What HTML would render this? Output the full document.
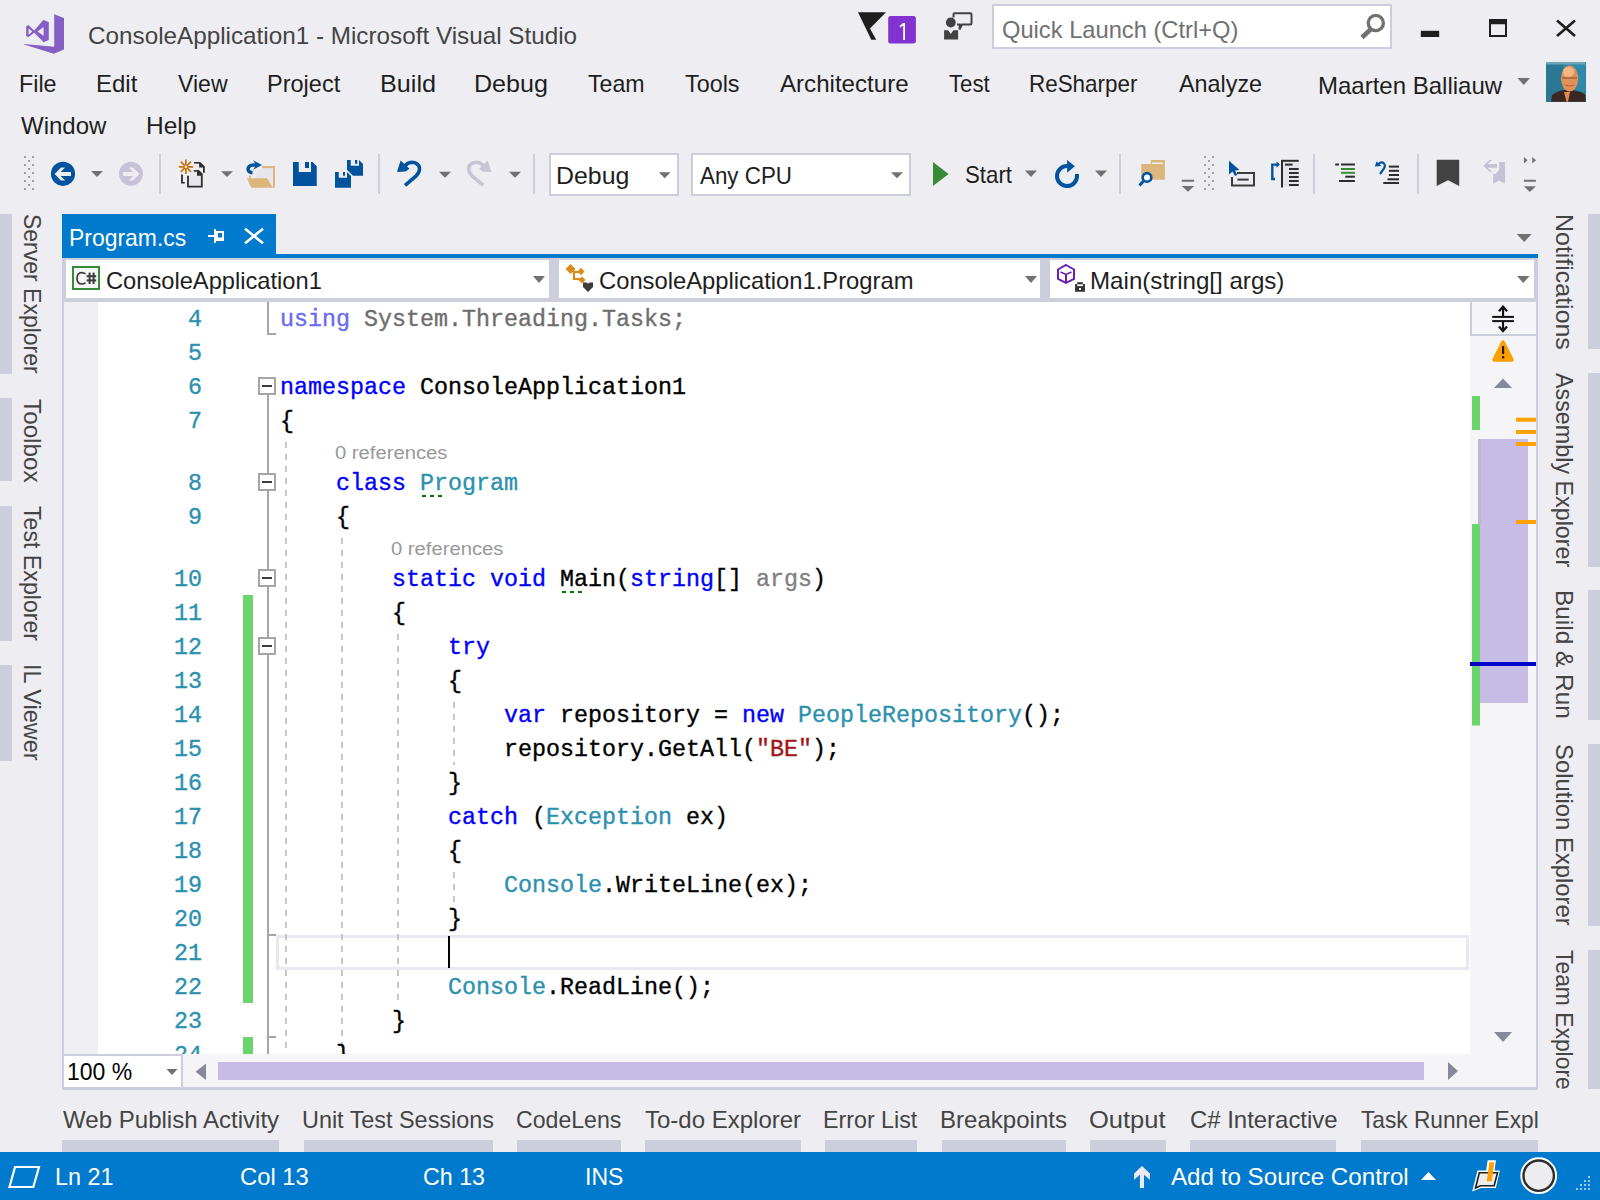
<!DOCTYPE html>
<html><head><meta charset="utf-8"><style>
html,body{margin:0;padding:0;width:1600px;height:1200px;overflow:hidden;background:#EEEEF2;font-family:"Liberation Sans",sans-serif;position:relative}
.t{position:absolute;line-height:0;white-space:pre;transform-origin:0 0}
.r{position:absolute}
svg{position:absolute;overflow:visible}
.cl{position:absolute;left:279px;line-height:0;white-space:pre;font-family:"Liberation Mono",monospace;font-size:23.333px;color:#000;-webkit-text-stroke:0.35px currentColor}
.ln{position:absolute;left:0;width:202px;text-align:right;line-height:0;white-space:pre;font-family:"Liberation Mono",monospace;font-size:23.333px;color:#2B91AF;-webkit-text-stroke:0.35px currentColor}
.kw{color:#0000FF} .ty{color:#2B91AF} .st{color:#A31515} .gr{color:#808080}
</style></head><body>
<!-- title bar -->
<div class="r" style="left:992px;top:4px;width:396px;height:41px;background:#fff;border:2px solid #CCCEDB"></div>
<!-- menu avatar -->
<div class="r" style="left:1546px;top:62px;width:40px;height:40px;background:#2A7FA0"></div>
<!-- toolbar combos -->
<div class="r" style="left:549px;top:153px;width:126px;height:39px;background:#fff;border:2px solid #CCCEDB"></div>
<div class="r" style="left:691px;top:153px;width:216px;height:39px;background:#fff;border:2px solid #CCCEDB"></div>
<!-- tab -->
<div class="r" style="left:62px;top:214px;width:214px;height:44px;background:#007ACC"></div>
<div class="r" style="left:62px;top:254px;width:1476px;height:4px;background:#007ACC"></div>
<!-- nav frame -->
<div class="r" style="left:62px;top:258px;width:1476px;height:44px;background:#CCCEDB"></div>
<div class="r" style="left:66px;top:260px;width:483px;height:38px;background:#fff"></div>
<div class="r" style="left:559px;top:260px;width:481px;height:38px;background:#fff"></div>
<div class="r" style="left:1050px;top:260px;width:484px;height:38px;background:#fff"></div>
<!-- editor frame -->
<div class="r" style="left:62px;top:302px;width:2px;height:788px;background:#CCCEDB"></div>
<div class="r" style="left:1536px;top:302px;width:2px;height:788px;background:#CCCEDB"></div>
<div class="r" style="left:62px;top:1087px;width:1476px;height:3px;background:#CCCEDB"></div>
<div class="r" style="left:64px;top:302px;width:34px;height:752px;background:#EFEFF2"></div>
<div class="r" style="left:98px;top:302px;width:1372px;height:752px;background:#FFFFFF"></div>
<div class="r" style="left:1470px;top:302px;width:66px;height:752px;background:#F5F5F7"></div>
<div class="r" style="left:64px;top:1054px;width:1472px;height:33px;background:#F5F5F7"></div>
<!-- zoom combo -->
<div class="r" style="left:64px;top:1054px;width:117px;height:31px;background:#fff;border:2px solid #CCCEDB;border-left:none"></div>
<div class="r" style="left:218px;top:1062px;width:1206px;height:18px;background:#C6BCE6"></div>
<!-- side strips -->
<div class="r" style="left:0;top:214px;width:12px;height:160px;background:#CCCEDB"></div>
<div class="r" style="left:0;top:398px;width:12px;height:83px;background:#CCCEDB"></div>
<div class="r" style="left:0;top:506px;width:12px;height:135px;background:#CCCEDB"></div>
<div class="r" style="left:0;top:665px;width:12px;height:96px;background:#CCCEDB"></div>
<div class="r" style="left:1588px;top:214px;width:12px;height:135px;background:#CCCEDB"></div>
<div class="r" style="left:1588px;top:373px;width:12px;height:194px;background:#CCCEDB"></div>
<div class="r" style="left:1588px;top:590px;width:12px;height:130px;background:#CCCEDB"></div>
<div class="r" style="left:1588px;top:744px;width:12px;height:182px;background:#CCCEDB"></div>
<div class="r" style="left:1588px;top:950px;width:12px;height:139px;background:#CCCEDB"></div>
<!-- bottom tab strips -->
<div class="r" style="left:62px;top:1140px;width:217px;height:12px;background:#CCCEDB"></div>
<div class="r" style="left:304px;top:1140px;width:189px;height:12px;background:#CCCEDB"></div>
<div class="r" style="left:517px;top:1140px;width:104px;height:12px;background:#CCCEDB"></div>
<div class="r" style="left:645px;top:1140px;width:156px;height:12px;background:#CCCEDB"></div>
<div class="r" style="left:825px;top:1140px;width:92px;height:12px;background:#CCCEDB"></div>
<div class="r" style="left:942px;top:1140px;width:124px;height:12px;background:#CCCEDB"></div>
<div class="r" style="left:1090px;top:1140px;width:76px;height:12px;background:#CCCEDB"></div>
<div class="r" style="left:1190px;top:1140px;width:146px;height:12px;background:#CCCEDB"></div>
<div class="r" style="left:1361px;top:1140px;width:177px;height:12px;background:#CCCEDB"></div>
<!-- status bar -->
<div class="r" style="left:0;top:1152px;width:1600px;height:48px;background:#007ACC"></div>

<div style="position:absolute;left:64px;top:302px;width:1406px;height:752px;overflow:hidden">
<div class="r" style="left:212px;top:633px;width:1193px;height:35px;background:transparent;box-sizing:border-box;border:3px solid #E8E8F0"></div>
<div class="r" style="left:179px;top:293px;width:10px;height:408px;background:#6CD46C;"></div>
<div class="r" style="left:179px;top:735px;width:10px;height:20px;background:#6CD46C;"></div>
<div class="r" style="left:203px;top:0px;width:2px;height:33px;background:#A5A5A5;"></div>
<div class="r" style="left:203px;top:31px;width:9px;height:2px;background:#A5A5A5;"></div>
<div class="r" style="left:194px;top:75px;width:14px;height:14px;border:2px solid #A5A5A5;background:#fff"></div>
<div class="r" style="left:198px;top:83px;width:10px;height:2px;background:#3C3C3C;"></div>
<div class="r" style="left:194px;top:171px;width:14px;height:14px;border:2px solid #A5A5A5;background:#fff"></div>
<div class="r" style="left:198px;top:179px;width:10px;height:2px;background:#3C3C3C;"></div>
<div class="r" style="left:194px;top:267px;width:14px;height:14px;border:2px solid #A5A5A5;background:#fff"></div>
<div class="r" style="left:198px;top:275px;width:10px;height:2px;background:#3C3C3C;"></div>
<div class="r" style="left:194px;top:335px;width:14px;height:14px;border:2px solid #A5A5A5;background:#fff"></div>
<div class="r" style="left:198px;top:343px;width:10px;height:2px;background:#3C3C3C;"></div>
<div class="r" style="left:203px;top:93px;width:2px;height:78px;background:#A5A5A5;"></div>
<div class="r" style="left:203px;top:189px;width:2px;height:78px;background:#A5A5A5;"></div>
<div class="r" style="left:203px;top:285px;width:2px;height:50px;background:#A5A5A5;"></div>
<div class="r" style="left:203px;top:353px;width:2px;height:399px;background:#A5A5A5;"></div>
<div class="r" style="left:203px;top:632px;width:9px;height:2px;background:#A5A5A5;"></div>
<div class="r" style="left:203px;top:734px;width:9px;height:2px;background:#A5A5A5;"></div>
<div class="r" style="left:221px;top:140px;width:2px;height:612px;background:repeating-linear-gradient(#C6C6C6 0 6px,transparent 6px 12px)"></div>
<div class="r" style="left:277px;top:236px;width:2px;height:516px;background:repeating-linear-gradient(#C6C6C6 0 6px,transparent 6px 12px)"></div>
<div class="r" style="left:333px;top:332px;width:2px;height:369px;background:repeating-linear-gradient(#C6C6C6 0 6px,transparent 6px 12px)"></div>
<div class="r" style="left:389px;top:400px;width:2px;height:63px;background:repeating-linear-gradient(#C6C6C6 0 6px,transparent 6px 12px)"></div>
<div class="r" style="left:389px;top:570px;width:2px;height:30px;background:repeating-linear-gradient(#C6C6C6 0 6px,transparent 6px 12px)"></div>
<div class="ln" style="left:-64px;top:17.9px">4</div>
<div class="cl" style="left:216px;top:17.9px"><span style="color:#6A6AF0">using</span> <span style="color:#6E6E6E">System.Threading.Tasks;</span></div>
<div class="ln" style="left:-64px;top:51.9px">5</div>
<div class="ln" style="left:-64px;top:85.9px">6</div>
<div class="cl" style="left:216px;top:85.9px"><span class="kw">namespace</span> ConsoleApplication1</div>
<div class="ln" style="left:-64px;top:119.9px">7</div>
<div class="cl" style="left:216px;top:119.9px">{</div>
<div class="ln" style="left:-64px;top:181.9px">8</div>
<div class="cl" style="left:216px;top:181.9px">    <span class="kw">class</span> <span class="ty">Program</span></div>
<div class="ln" style="left:-64px;top:215.9px">9</div>
<div class="cl" style="left:216px;top:215.9px">    {</div>
<div class="ln" style="left:-64px;top:277.9px">10</div>
<div class="cl" style="left:216px;top:277.9px">        <span class="kw">static</span> <span class="kw">void</span> Main(<span class="kw">string</span>[] <span class="gr">args</span>)</div>
<div class="ln" style="left:-64px;top:311.9px">11</div>
<div class="cl" style="left:216px;top:311.9px">        {</div>
<div class="ln" style="left:-64px;top:345.9px">12</div>
<div class="cl" style="left:216px;top:345.9px">            <span class="kw">try</span></div>
<div class="ln" style="left:-64px;top:379.9px">13</div>
<div class="cl" style="left:216px;top:379.9px">            {</div>
<div class="ln" style="left:-64px;top:413.9px">14</div>
<div class="cl" style="left:216px;top:413.9px">                <span class="kw">var</span> repository = <span class="kw">new</span> <span class="ty">PeopleRepository</span>();</div>
<div class="ln" style="left:-64px;top:447.9px">15</div>
<div class="cl" style="left:216px;top:447.9px">                repository.GetAll(<span class="st">"BE"</span>);</div>
<div class="ln" style="left:-64px;top:481.9px">16</div>
<div class="cl" style="left:216px;top:481.9px">            }</div>
<div class="ln" style="left:-64px;top:515.9px">17</div>
<div class="cl" style="left:216px;top:515.9px">            <span class="kw">catch</span> (<span class="ty">Exception</span> ex)</div>
<div class="ln" style="left:-64px;top:549.9px">18</div>
<div class="cl" style="left:216px;top:549.9px">            {</div>
<div class="ln" style="left:-64px;top:583.9px">19</div>
<div class="cl" style="left:216px;top:583.9px">                <span class="ty">Console</span>.WriteLine(ex);</div>
<div class="ln" style="left:-64px;top:617.9px">20</div>
<div class="cl" style="left:216px;top:617.9px">            }</div>
<div class="ln" style="left:-64px;top:651.9px">21</div>
<div class="ln" style="left:-64px;top:685.9px">22</div>
<div class="cl" style="left:216px;top:685.9px">            <span class="ty">Console</span>.ReadLine();</div>
<div class="ln" style="left:-64px;top:719.9px">23</div>
<div class="cl" style="left:216px;top:719.9px">        }</div>
<div class="ln" style="left:-64px;top:753.9px">24</div>
<div class="cl" style="left:216px;top:753.9px">    }</div>
<div class="r" style="left:358px;top:193px;width:20px;height:2px;background:repeating-linear-gradient(90deg,#007A00 0 4px,transparent 4px 8px)"></div>
<div class="r" style="left:498px;top:289px;width:20px;height:2px;background:repeating-linear-gradient(90deg,#007A00 0 4px,transparent 4px 8px)"></div>
<div class="r" style="left:384px;top:634px;width:2px;height:32px;background:#000;"></div>
</div>
<svg style="left:0;top:0" width="1600" height="1200" viewBox="0 0 1600 1200">
<!-- VS logo -->
<path fill="#865FC5" d="M54.2,14.2 L64,18.1 L64,49.6 L53.75,53.75 L24,44.4 L24.3,43.9 L54.2,46.7 Z"/>
<path fill="#865FC5" fill-rule="evenodd" d="M26.2,26.4 L28.3,24.9 L34.2,30.4 L43.3,19.9 L48.8,22.1 L48.8,40 L43.7,42.2 L34.2,32.8 L28.3,37.3 L26.2,36.1 Z M28.6,28.6 L32.3,31.6 L28.6,34.8 Z M43.6,26.9 L37.6,31.6 L43.6,35.8 Z"/>
<!-- flag + badge -->
<path fill="#1E1E1E" d="M858,12.3 L886,12.3 L870,28.6 L876.2,39.8 L871.3,39.8 Z"/>
<rect x="888.2" y="16" width="27.7" height="27.6" rx="2.5" fill="#8232CF"/>
<path fill="#fff" d="M899.5,25.8 L903.3,23 L905,23 L905,40 L903.2,40 L903.2,25.6 L900.2,27.5 Z"/>
<!-- feedback person -->
<circle cx="950.8" cy="22.5" r="4.9" fill="#424242"/>
<path fill="#424242" d="M944.1,30.2 L948.2,30.2 L950.8,33.9 L953.4,30.2 L958.1,30.2 L958.1,39.6 L944.1,39.6 Z"/>
<path fill="none" stroke="#424242" stroke-width="2" d="M953.5,17.5 L953.5,14.5 Q953.5,13.3 954.7,13.3 L970.3,13.3 Q971.5,13.3 971.5,14.5 L971.5,23.3 Q971.5,24.5 970.3,24.5 L962,24.5 L959.5,29.5 L959.8,24.5 L957,24.5"/>
<!-- quick launch search -->
<circle cx="1375.8" cy="23" r="7.6" fill="none" stroke="#717171" stroke-width="3.3"/>
<path d="M1371.3,28.8 L1362,37.5" stroke="#717171" stroke-width="4.6"/>
<!-- window buttons -->
<rect x="1420.8" y="30.8" width="18.4" height="6.2" fill="#1E1E1E"/>
<path fill="#1E1E1E" fill-rule="evenodd" d="M1489,19 L1507,19 L1507,37 L1489,37 Z M1491,24.3 L1505,24.3 L1505,35 L1491,35 Z"/>
<path d="M1557,20.5 L1575,36 M1575,20.5 L1557,36" stroke="#1E1E1E" stroke-width="2.6"/>
<!-- user dropdown -->
<path fill="#717171" d="M1517.5,78 L1530,78 L1523.75,85 Z"/>
<!-- avatar -->
<g>
<rect x="1546" y="62" width="39.5" height="39.7" fill="#2A7894"/>
<rect x="1563" y="62" width="22.5" height="30" fill="#2F89AA"/>
<rect x="1546" y="62" width="39.5" height="2.5" fill="#6FA3B5"/>
<path fill="#3B2622" d="M1551,101.7 L1552,95 Q1558,90.5 1565,90 L1572,90 Q1581,91 1585.5,95 L1585.5,101.7 Z"/>
<path fill="#E08A50" d="M1564,92 L1570,92 L1568,101.7 L1566.5,101.7 Z"/>
<ellipse cx="1569.6" cy="78.5" rx="8.6" ry="13" fill="#E39158"/>
<ellipse cx="1568.5" cy="72" rx="5.5" ry="5" fill="#F2B882"/>
<rect x="1562" y="77" width="15" height="2" fill="#9A5E3E" opacity="0.7"/>
<path fill="#B8683A" d="M1563,84 Q1569.6,89 1576,84 Q1569.6,86.5 1563,84 Z"/>
</g>
<!-- toolbar grip 1 -->
<g fill="#A0A0A8">
<rect x="24" y="156" width="2" height="2"/><rect x="24" y="164" width="2" height="2"/><rect x="24" y="172" width="2" height="2"/><rect x="24" y="180" width="2" height="2"/><rect x="24" y="188" width="2" height="2"/>
<rect x="32" y="156" width="2" height="2"/><rect x="32" y="164" width="2" height="2"/><rect x="32" y="172" width="2" height="2"/><rect x="32" y="180" width="2" height="2"/><rect x="32" y="188" width="2" height="2"/>
<rect x="28" y="160" width="2" height="2"/><rect x="28" y="168" width="2" height="2"/><rect x="28" y="176" width="2" height="2"/><rect x="28" y="184" width="2" height="2"/>
<rect x="1204" y="156" width="2" height="2"/><rect x="1204" y="164" width="2" height="2"/><rect x="1204" y="172" width="2" height="2"/><rect x="1204" y="180" width="2" height="2"/><rect x="1204" y="188" width="2" height="2"/>
<rect x="1212" y="156" width="2" height="2"/><rect x="1212" y="164" width="2" height="2"/><rect x="1212" y="172" width="2" height="2"/><rect x="1212" y="180" width="2" height="2"/><rect x="1212" y="188" width="2" height="2"/>
<rect x="1208" y="160" width="2" height="2"/><rect x="1208" y="168" width="2" height="2"/><rect x="1208" y="176" width="2" height="2"/><rect x="1208" y="184" width="2" height="2"/>
</g>
<!-- back -->
<circle cx="63" cy="173.8" r="12.1" fill="#00539C"/>
<path fill="#EEEEF2" d="M54.6,173.9 L61,167.4 L65.2,167.4 L60.6,172 L71,172 L71,176 L60.6,176 L65.2,180.5 L61,180.5 Z"/>
<!-- forward disabled -->
<circle cx="131" cy="173.8" r="12" fill="#C8C2D8"/>
<path fill="#EEEEF2" d="M139.4,173.9 L133,167.4 L128.8,167.4 L133.4,172 L123,172 L123,176 L133.4,176 L128.8,180.5 L133,180.5 Z"/>
<!-- dropdown arrows -->
<g fill="#717171">
<path d="M91,171 L103,171 L97,177 Z"/>
<path d="M221,171.2 L233,171.2 L227,177 Z"/>
<path d="M439,171.8 L451,171.8 L445,177.7 Z"/>
<path d="M509,171.8 L521,171.8 L515,177.7 Z"/>
<path d="M658.8,172.3 L670.6,172.3 L664.7,178.3 Z"/>
<path d="M891,172.3 L903,172.3 L897,178.3 Z"/>
<path d="M1025,170.6 L1037,170.6 L1031,177 Z"/>
<path d="M1095,170.6 L1107,170.6 L1101,177 Z"/>
<path d="M1181.75,179.8 L1194.1,179.8 L1194.1,181.8 L1181.75,181.8 Z M1181.75,186 L1194.1,186 L1188,191.8 Z"/>
<path d="M1523.9,157 L1527.6,160.2 L1523.9,163.6 Z M1532.3,157 L1536,160.2 L1532.3,163.6 Z M1523.9,179.8 L1535.9,179.8 L1535.9,181.8 L1523.9,181.8 Z M1523.9,186.3 L1535.9,186.3 L1529.9,192 Z"/>
<path d="M1516.7,234 L1531.7,234 L1524.2,242 Z"/>
<path d="M533,276 L545,276 L539,283 Z"/>
<path d="M1025,276 L1037,276 L1031,283 Z"/>
<path d="M1517,276 L1529.5,276 L1523.25,283 Z"/>
<path d="M166.5,1069 L177.5,1069 L172,1075 Z"/>
</g>
<!-- separators -->
<g fill="#CCCEDB">
<rect x="159" y="154" width="2" height="40"/>
<rect x="378" y="154" width="2" height="40"/>
<rect x="533" y="154" width="2" height="40"/>
<rect x="1119" y="154" width="2" height="40"/>
<rect x="1313" y="154" width="2" height="40"/>
<rect x="1417" y="154" width="2" height="40"/>
</g>
<!-- new project -->
<g stroke="#C9730F" stroke-width="1.7">
<path d="M185.9,159.6 L185.9,174 M178.7,166.8 L193.1,166.8 M180.8,161.7 L191,171.9 M191,161.7 L180.8,171.9"/>
</g>
<circle cx="185.9" cy="166.8" r="1.3" fill="#F2F2F4"/>
<path fill="#E6E6EC" d="M188.9,175.8 L193.7,171.6 L197,171.6 L197,175.8 L200.9,175.8 L200.9,185.7 L188.9,185.7 Z"/>
<g fill="#2D2D2D">
<rect x="194" y="162" width="6" height="1.6"/>
<path d="M199.1,162 L200.2,162 L204.8,166.4 L204.8,172.8 L203,172.8 L203,167.4 L199.1,167.4 Z"/>
<rect x="193.7" y="170.1" width="5.1" height="1.6"/>
<path d="M197,170.1 L198.9,170.1 L202.7,173.7 L202.7,187.5 L187.1,187.5 L187.1,175.8 L188.9,175.8 L188.9,185.7 L200.9,185.7 L200.9,175.8 L197,175.8 Z"/>
<path d="M181.1,174.6 L182.9,174.6 L182.9,182.1 L184.7,182.1 L184.7,183.6 L181.1,183.6 Z"/>
</g>
<!-- open folder -->
<path fill="#E6E6EC" stroke="#DCB67A" stroke-width="1.8" d="M262,167.1 L274,167.1 L274,186.9"/>
<path fill="#E6E6EC" d="M256,173.5 L259,170 L263,168 L273.1,168 L273.1,187 L256,187 Z"/>
<rect x="273" y="166.2" width="1.9" height="21.6" fill="#DCB67A"/>
<rect x="262" y="166.2" width="12" height="1.9" fill="#DCB67A"/>
<path fill="#DCB67A" d="M247,178.2 L267.1,178.2 L272.9,187.8 L251.2,187.8 Z"/>
<rect x="249.1" y="175.5" width="1.8" height="3" fill="#DCB67A"/>
<path fill="none" stroke="#00539C" stroke-width="3.4" d="M257,165 L253,165 Q248,165.5 248,169.5 Q248.5,172.5 252.5,172.8"/>
<path fill="#00539C" d="M253,160.2 L262,165 L253,169.8 L256.3,165 Z"/>
<!-- save -->
<path fill="#00539C" fill-rule="evenodd" d="M293,162 L312.5,162 L316.75,166.2 L316.75,186 L293,186 Z M298.75,162 L311,162 L311,172 L298.75,172 Z"/>
<rect x="305" y="162" width="4" height="6" fill="#00539C"/>
<!-- save all -->
<path fill="#00539C" fill-rule="evenodd" d="M347,160 L359,160 L363,164 L363,175.75 L353,175.75 L347,169.8 Z M350.75,160 L359,160 L359,165.75 L350.75,165.75 Z"/>
<rect x="355" y="160" width="2.25" height="3.75" fill="#00539C"/>
<path fill="#00539C" fill-rule="evenodd" d="M335,172 L347,172 L351,176 L351,187.75 L335,187.75 Z M338.75,172 L347,172 L347,177.75 L338.75,177.75 Z"/>
<rect x="343" y="172" width="2" height="3.75" fill="#00539C"/>
<!-- undo -->
<path fill="none" stroke="#00539C" stroke-width="3.6" d="M405,185.3 L415.6,176.5 Q420,172 419.5,168 Q418.5,162.5 411.5,162.3 Q407.5,162.5 404.5,166.5"/>
<path fill="#00539C" d="M397,172 L400.6,160.5 L409.5,168.8 L405.5,171.5 Z"/>
<!-- redo disabled -->
<path fill="none" stroke="#C8C4D6" stroke-width="3.6" d="M483.3,185.3 L472.7,176.5 Q468.3,172 468.8,168 Q469.8,162.5 476.8,162.3 Q480.8,162.5 483.8,166.5"/>
<path fill="#C8C4D6" d="M491.3,172 L487.7,160.5 L478.8,168.8 L482.8,171.5 Z"/>
<!-- play -->
<path fill="#388A34" d="M933,162 L948.6,174 L933,186 Z"/>
<!-- refresh -->
<path fill="none" stroke="#00539C" stroke-width="4" d="M1077,174 L1077,176.1 A10,10 0 1 1 1067.5,166.1"/>
<path fill="#00539C" d="M1067.1,159.9 L1074.9,166.35 L1067.1,172.8 Z"/>
<!-- find in files -->
<path fill="#DCB67A" d="M1150.8,160.1 L1164.9,160.1 L1164.9,179.8 L1141.25,179.8 L1141.25,164 L1150.8,164 Z"/>
<rect x="1152" y="162.5" width="11" height="1.5" fill="#F2F2F2"/>
<circle cx="1147" cy="177.4" r="4.3" fill="#fff" stroke="#00539C" stroke-width="2.6"/>
<path d="M1143.5,181 L1139.5,185.5" stroke="#00539C" stroke-width="3"/>
<!-- select icon -->
<path fill="none" stroke="#3C3C3C" stroke-width="2" d="M1237,173 L1254,173 L1254,185.5 L1232,185.5 L1232,177"/>
<rect x="1237.4" y="178.6" width="11.3" height="2" fill="#3C3C3C"/>
<path fill="#00539C" d="M1229,160.7 L1239.5,170 L1235,170.5 L1237.3,175 L1235,176 L1232.6,171.5 L1229,174.5 Z"/>
<!-- bracket list icon -->
<path fill="none" stroke="#00539C" stroke-width="2.4" d="M1277,164.6 L1272.3,164.6 L1272.3,179 L1275,179"/>
<path fill="#00539C" d="M1276.5,161.5 L1280,164.6 L1276.5,167.7 Z"/>
<rect x="1283" y="161" width="16" height="26" fill="#E4E4EA"/>
<g fill="#2D2D2D">
<rect x="1281" y="160" width="2" height="27.5"/>
<rect x="1281" y="159.8" width="17.7" height="2"/>
<rect x="1285" y="163.6" width="7.6" height="2"/>
<rect x="1289" y="168" width="9.7" height="2"/>
<rect x="1289" y="172" width="9.7" height="2"/>
<rect x="1289" y="176" width="9.7" height="2"/>
<rect x="1289" y="180" width="9.7" height="2"/>
<rect x="1289" y="184" width="9.7" height="2"/>
</g>
<!-- format lines icon -->
<g fill="#2D2D2D">
<rect x="1335.2" y="163.5" width="3.8" height="2"/>
<rect x="1341" y="163.5" width="13.9" height="2"/>
<rect x="1345.3" y="175.7" width="9.6" height="2"/>
<rect x="1339" y="180" width="15.9" height="2"/>
</g>
<rect x="1341" y="168" width="13.9" height="2" fill="#388A34"/>
<rect x="1341" y="171.8" width="13.9" height="2" fill="#388A34"/>
<!-- undo lines icon -->
<g fill="#2D2D2D">
<rect x="1388.9" y="165.6" width="10.1" height="2"/>
<rect x="1388.9" y="169.8" width="10.1" height="2"/>
<rect x="1388.9" y="174" width="10.1" height="2"/>
<rect x="1387.5" y="178.3" width="11.5" height="2"/>
<rect x="1383.3" y="182" width="15.7" height="2"/>
</g>
<path fill="none" stroke="#00539C" stroke-width="2.2" d="M1380,174 L1384,168.5 Q1386,165 1383.5,163 Q1381,161.5 1378.5,164"/>
<path fill="#00539C" d="M1374.8,166.5 L1376.5,161.5 L1381.5,166 Z"/>
<!-- bookmark -->
<path fill="#424242" d="M1436.7,159.8 L1459.2,159.8 L1459.2,185.9 L1448,180.2 L1436.7,185.9 Z"/>
<!-- bookmark nav disabled -->
<path fill="#C6C2D6" d="M1499.1,162 L1505.1,162 L1505.1,183.7 L1499.1,180.4 L1493.1,183.7 L1493.1,174 L1495.5,174 L1499.1,170 Z"/>
<path fill="#C6C2D6" d="M1483.2,165.8 L1489.5,160 L1492.2,160 L1487.5,163.9 L1497,163.9 L1497,167.8 L1487.5,167.8 L1492.2,171.7 L1489.5,171.7 Z"/>
<!-- tab icons -->
<g fill="#fff">
<rect x="208" y="235" width="6" height="2"/>
<rect x="214" y="229" width="2" height="14"/>
</g>
<path fill="#fff" fill-rule="evenodd" d="M216,231 L224,231 L224,241 L216,241 Z M218,233 L222,233 L222,237.5 L218,237.5 Z"/>
<path d="M245,228.8 L263,243.2 M263,228.8 L245,243.2" stroke="#fff" stroke-width="2.6"/>
<!-- nav icons -->
<rect x="73" y="267" width="26" height="22" fill="#F6F6F6" stroke="#388A34" stroke-width="2"/>
<path fill="none" stroke="#3C3C3C" stroke-width="1.7" d="M85.5,274 Q84,272.6 81.8,272.6 Q77,272.6 77,278.3 Q77,284 81.8,284 Q84,284 85.5,282.6"/><g fill="#3C3C3C"><rect x="88.6" y="272.6" width="2" height="11.4"/><rect x="92.6" y="272.6" width="2" height="11.4"/><rect x="86.6" y="275.2" width="9.6" height="2"/><rect x="86.6" y="279.4" width="9.6" height="2"/></g>
<path fill="none" stroke="#D98C1A" stroke-width="2.2" d="M571,269 L574,272 L574,279 L581,279 M574,272 L581,272"/>
<path fill="#D98C1A" d="M570.5,264 L575.5,269 L570.5,274 L565.5,269 Z"/>
<path fill="#D98C1A" d="M581,267.8 L584.5,271.5 L581,275.2 L577.5,271.5 Z"/>
<path fill="#D98C1A" d="M582,276.5 L585.5,280 L582,283.5 L578.5,280 Z"/>
<path fill="#3C3C3C" d="M583,282.5 L587,282.5 L588,284 L589,282.5 L593,282.5 L593,287 L588,292 L583,287 Z"/>
<path fill="none" stroke="#6A1FB0" stroke-width="2" d="M1066,265 L1074,269.5 L1074,279 L1066,283 L1058,279 L1058,269.5 Z M1066,274 L1066,283.5"/>
<path fill="none" stroke="#6A1FB0" stroke-width="1.4" d="M1060.5,272 L1066,274.5 L1071.5,272"/>
<rect x="1075.1" y="284" width="9.8" height="7.8" fill="#333"/>
<rect x="1077.2" y="282.2" width="5.6" height="1.8" fill="#333"/>
<rect x="1077.1" y="284.3" width="5.8" height="1.8" fill="#fff"/>
<rect x="1079" y="288" width="2" height="2" fill="#fff"/>
</svg>

<svg style="left:0;top:0" width="1600" height="1200" viewBox="0 0 1600 1200">
<!-- vertical scrollbar split button -->
<rect x="1471" y="302" width="65" height="33" fill="#F5F5F7"/>
<rect x="1470" y="302" width="2" height="34" fill="#CCCEDB"/>
<rect x="1470" y="334" width="66" height="2" fill="#CCCEDB"/>
<g fill="#111">
<rect x="1492.2" y="315.9" width="21.7" height="2"/>
<rect x="1492.2" y="320.1" width="21.7" height="2"/>
<rect x="1502" y="308" width="2.1" height="8"/>
<rect x="1502" y="322" width="2.1" height="8"/>
</g>
<path d="M1499,311.2 L1503,306.8 L1507,311.2 M1499,326.6 L1503,331 L1507,326.6" fill="none" stroke="#111" stroke-width="2.3"/>
<!-- warning -->
<path fill="#F9A000" d="M1503,340.3 Q1504,340.3 1504.6,341.3 L1513.6,359 Q1514,361.7 1512,361.7 L1494,361.7 Q1492,361.7 1492.4,359 L1501.4,341.3 Q1502,340.3 1503,340.3 Z"/>
<rect x="1502" y="346" width="2.2" height="8" fill="#1E1E1E"/>
<rect x="1502" y="356" width="2.2" height="2.4" fill="#1E1E1E"/>
<!-- up arrow -->
<path fill="#868999" d="M1494,388 L1512,388 L1503,378.5 Z"/>
<!-- markers -->
<rect x="1472" y="396" width="8" height="34" fill="#6CD46C"/>
<rect x="1478" y="439" width="50" height="264" fill="#C6BCE6"/>
<rect x="1478" y="439" width="3" height="85" fill="#BDBBC8"/>
<rect x="1516" y="417.7" width="20" height="4" fill="#FFA100"/>
<rect x="1516" y="430" width="20" height="4" fill="#FFA100"/>
<rect x="1516" y="442" width="20" height="4" fill="#FFA100"/>
<rect x="1516" y="520" width="20" height="4" fill="#FFA100"/>
<rect x="1472" y="524" width="8" height="201.5" fill="#6CD46C"/>
<rect x="1470" y="662" width="66" height="4" fill="#0000CD"/>
<!-- down arrow -->
<path fill="#868999" d="M1494,1032 L1512,1032 L1503,1042 Z"/>
<!-- hscroll arrows -->
<path fill="#868999" d="M206,1063.4 L206,1080 L195.6,1071.7 Z"/>
<path fill="#868999" d="M1448,1062 L1448,1080 L1458,1071 Z"/>
<!-- status bar -->
<path fill="none" stroke="#fff" stroke-width="2.2" d="M15,1167 L39,1167 L33.3,1187 L9.5,1187 Z"/>
<path fill="#EAEAF0" d="M1142,1166.1 L1149.9,1173.6 L1149.9,1179.8 L1144,1174.7 L1144,1187.9 L1139.9,1187.9 L1139.9,1174.7 L1134.1,1179.8 L1134.1,1173.6 Z"/>
<path fill="#fff" d="M1421,1180 L1436,1180 L1428.5,1172 Z"/>
<path fill="#fff" d="M1472.2,1191.4 L1477.5,1170.4 L1486.2,1170.4 L1487.6,1160.3 L1495.9,1160.3 L1494.6,1170.4 L1499.8,1170.4 L1495.9,1187.9 L1481,1187.9 Z"/>
<path fill="#EDEDED" stroke="#1E1E1E" stroke-width="1.6" d="M1475.5,1188 L1479.3,1172.8 L1497.5,1172.8 L1494.2,1185.7 L1480.5,1185.7 Z"/>
<path fill="#FFA100" d="M1489.3,1162.3 L1494.3,1162.3 L1491.7,1181.3 L1486.8,1181.3 Z"/>
<circle cx="1538.7" cy="1175.7" r="17.3" fill="#EDEDF0" stroke="#fff" stroke-width="2.2"/>
<circle cx="1538.7" cy="1175.7" r="15.2" fill="none" stroke="#2D2D2D" stroke-width="2.4"/>
<g fill="#9CC8EE">
<rect x="1588" y="1176" width="2" height="2"/>
<rect x="1584" y="1180" width="2" height="2"/><rect x="1588" y="1180" width="2" height="2"/>
<rect x="1580" y="1184" width="2" height="2"/><rect x="1584" y="1184" width="2" height="2"/><rect x="1588" y="1184" width="2" height="2"/>
<rect x="1576" y="1188" width="2" height="2"/><rect x="1580" y="1188" width="2" height="2"/><rect x="1584" y="1188" width="2" height="2"/><rect x="1588" y="1188" width="2" height="2"/>
</g>
</svg>

<div class="t" style="left:87.74px;top:35.60px;font-size:24px;color:#444444;transform:scaleX(1.0109)">ConsoleApplication1 - Microsoft Visual Studio</div>
<div class="t" style="left:1002.01px;top:29.50px;font-size:24px;color:#717171;transform:scaleX(0.9873)">Quick Launch (Ctrl+Q)</div>
<div class="t" style="left:19.06px;top:84.00px;font-size:24px;color:#1E1E1E;transform:scaleX(0.9722)">File</div>
<div class="t" style="left:96.00px;top:84.00px;font-size:24px;color:#1E1E1E;transform:scaleX(1.0000)">Edit</div>
<div class="t" style="left:177.50px;top:84.00px;font-size:24px;color:#1E1E1E;transform:scaleX(0.9615)">View</div>
<div class="t" style="left:267.04px;top:84.00px;font-size:24px;color:#1E1E1E;transform:scaleX(0.9795)">Project</div>
<div class="t" style="left:379.90px;top:84.00px;font-size:24px;color:#1E1E1E;transform:scaleX(1.0500)">Build</div>
<div class="t" style="left:473.91px;top:84.00px;font-size:24px;color:#1E1E1E;transform:scaleX(1.0448)">Debug</div>
<div class="t" style="left:587.50px;top:84.00px;font-size:24px;color:#1E1E1E;transform:scaleX(0.9649)">Team</div>
<div class="t" style="left:684.50px;top:84.00px;font-size:24px;color:#1E1E1E;transform:scaleX(0.9727)">Tools</div>
<div class="t" style="left:779.50px;top:84.00px;font-size:24px;color:#1E1E1E;transform:scaleX(1.0039)">Architecture</div>
<div class="t" style="left:948.75px;top:84.00px;font-size:24px;color:#1E1E1E;transform:scaleX(0.9261)">Test</div>
<div class="t" style="left:1029.13px;top:84.00px;font-size:24px;color:#1E1E1E;transform:scaleX(0.9342)">ReSharper</div>
<div class="t" style="left:1178.70px;top:84.00px;font-size:24px;color:#1E1E1E;transform:scaleX(0.9726)">Analyze</div>
<div class="t" style="left:1318.00px;top:86.00px;font-size:24px;color:#1E1E1E;transform:scaleX(1.0000)">Maarten Balliauw</div>
<div class="t" style="left:21.00px;top:125.75px;font-size:24px;color:#1E1E1E;transform:scaleX(1.0000)">Window</div>
<div class="t" style="left:145.96px;top:125.75px;font-size:24px;color:#1E1E1E;transform:scaleX(1.0213)">Help</div>
<div class="t" style="left:556.43px;top:175.50px;font-size:24px;color:#1E1E1E;transform:scaleX(1.0373)">Debug</div>
<div class="t" style="left:699.60px;top:175.50px;font-size:24px;color:#1E1E1E;transform:scaleX(0.9320)">Any CPU</div>
<div class="t" style="left:965.07px;top:175.40px;font-size:24px;color:#1E1E1E;transform:scaleX(0.9280)">Start</div>
<div class="t" style="left:69.09px;top:237.60px;font-size:24px;color:#FFFFFF;transform:scaleX(0.9550)">Program.cs</div>
<div class="t" style="left:106.01px;top:281.00px;font-size:24px;color:#1E1E1E;transform:scaleX(0.9862)">ConsoleApplication1</div>
<div class="t" style="left:599.01px;top:281.00px;font-size:24px;color:#1E1E1E;transform:scaleX(0.9905)">ConsoleApplication1.Program</div>
<div class="t" style="left:1089.99px;top:281.00px;font-size:24px;color:#1E1E1E;transform:scaleX(1.0053)">Main(string[] args)</div>
<div class="t" style="left:335.13px;top:452.75px;font-size:18px;color:#999999;transform:scaleX(1.1237)">0 references</div>
<div class="t" style="left:391.13px;top:548.75px;font-size:18px;color:#999999;transform:scaleX(1.1237)">0 references</div>
<div class="t" style="left:66.83px;top:1072.00px;font-size:24px;color:#000000;transform:scaleX(0.9577)">100 %</div>
<div class="t" style="left:62.50px;top:1119.50px;font-size:24px;color:#444444;transform:scaleX(1.0023)">Web Publish Activity</div>
<div class="t" style="left:302.05px;top:1119.50px;font-size:24px;color:#444444;transform:scaleX(0.9742)">Unit Test Sessions</div>
<div class="t" style="left:516.04px;top:1119.50px;font-size:24px;color:#444444;transform:scaleX(0.9630)">CodeLens</div>
<div class="t" style="left:645.00px;top:1119.50px;font-size:24px;color:#444444;transform:scaleX(1.0000)">To-do Explorer</div>
<div class="t" style="left:823.06px;top:1119.50px;font-size:24px;color:#444444;transform:scaleX(0.9684)">Error List</div>
<div class="t" style="left:939.70px;top:1119.50px;font-size:24px;color:#444444;transform:scaleX(1.0024)">Breakpoints</div>
<div class="t" style="left:1089.34px;top:1119.50px;font-size:24px;color:#444444;transform:scaleX(1.0620)">Output</div>
<div class="t" style="left:1189.50px;top:1119.50px;font-size:24px;color:#444444;transform:scaleX(0.9966)">C# Interactive</div>
<div class="t" style="left:1361.30px;top:1119.50px;font-size:24px;color:#444444;transform:scaleX(0.9449)">Task Runner Expl</div>
<div class="t" style="left:55.05px;top:1177.30px;font-size:24px;color:#FFFFFF;transform:scaleX(0.9737)">Ln 21</div>
<div class="t" style="left:239.61px;top:1177.30px;font-size:24px;color:#FFFFFF;transform:scaleX(0.9910)">Col 13</div>
<div class="t" style="left:423.43px;top:1177.30px;font-size:24px;color:#FFFFFF;transform:scaleX(0.9677)">Ch 13</div>
<div class="t" style="left:585.08px;top:1177.30px;font-size:24px;color:#FFFFFF;transform:scaleX(0.9595)">INS</div>
<div class="t" style="left:1170.80px;top:1177.30px;font-size:24px;color:#FFFFFF;transform:scaleX(1.0068)">Add to Source Control</div>
<div class="t" style="left:31.50px;top:214.04px;font-size:24px;color:#444444;transform:rotate(90deg) scaleX(0.9578)">Server Explorer</div>
<div class="t" style="left:31.50px;top:398.60px;font-size:24px;color:#444444;transform:rotate(90deg) scaleX(1.0110)">Toolbox</div>
<div class="t" style="left:31.50px;top:506.00px;font-size:24px;color:#444444;transform:rotate(90deg) scaleX(0.9643)">Test Explorer</div>
<div class="t" style="left:31.50px;top:664.04px;font-size:24px;color:#444444;transform:rotate(90deg) scaleX(0.9794)">IL Viewer</div>
<div class="t" style="left:1563.50px;top:213.67px;font-size:24px;color:#444444;transform:rotate(90deg) scaleX(1.0391)">Notifications</div>
<div class="t" style="left:1563.50px;top:373.25px;font-size:24px;color:#444444;transform:rotate(90deg) scaleX(0.9712)">Assembly Explorer</div>
<div class="t" style="left:1563.50px;top:589.97px;font-size:24px;color:#444444;transform:rotate(90deg) scaleX(1.0161)">Build &amp; Run</div>
<div class="t" style="left:1563.50px;top:744.01px;font-size:24px;color:#444444;transform:rotate(90deg) scaleX(0.9945)">Solution Explorer</div>
<div class="t" style="left:1563.50px;top:950.00px;font-size:24px;color:#444444;transform:rotate(90deg) scaleX(0.9521)">Team Explore</div>
</body></html>
